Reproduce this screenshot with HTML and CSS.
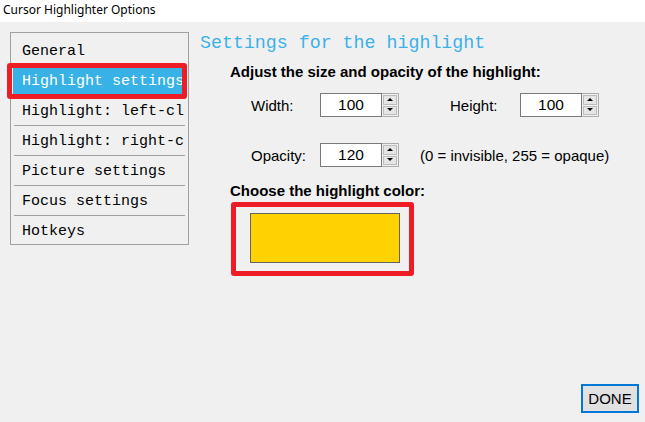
FILE: index.html
```html
<!DOCTYPE html>
<html>
<head>
<meta charset="utf-8">
<link rel="stylesheet" href="styles.css">
</head>
<body>
<div class="window">
  <div class="titlebar">Cursor Highlighter Options</div>
  <div class="content">
    <div class="listbox">
      <div class="item">General</div>
      <div class="item selected">Highlight settings</div>
      <div class="item">Highlight: left-cl</div>
      <div class="item">Highlight: right-c</div>
      <div class="item">Picture settings</div>
      <div class="item">Focus settings</div>
      <div class="item last">Hotkeys</div>
    </div>
    <div class="panel">
      <div class="heading">Settings for the highlight</div>
      <div class="subhead">Adjust the size and opacity of the highlight:</div>
      <div class="row row-size">
        <span class="label">Width:</span>
        <div class="spin"><span class="field">100</span><span class="arrows"><span class="btn up"></span><span class="btn down"></span></span></div>
        <span class="label label-height">Height:</span>
        <div class="spin"><span class="field">100</span><span class="arrows"><span class="btn up"></span><span class="btn down"></span></span></div>
      </div>
      <div class="row row-opacity">
        <span class="label">Opacity:</span>
        <div class="spin"><span class="field">120</span><span class="arrows"><span class="btn up"></span><span class="btn down"></span></span></div>
        <span class="hint">(0 = invisible, 255 = opaque)</span>
      </div>
      <div class="subhead subhead-color">Choose the highlight color:</div>
      <div class="swatch"></div>
    </div>
  </div>
  <div class="footer">
    <button class="done">DONE</button>
  </div>
  <div class="mark mark-list"></div>
  <div class="mark mark-color"></div>
</div>
</body>
</html>
```

FILE: styles.css
```css
html, body {
  margin: 0;
  padding: 0;
}
body {
  background: #f0f0f0;
  font-family: "Liberation Sans", Arial, sans-serif;
  color: #000;
}
.window {
  position: relative;
  width: 645px;
  height: 422px;
  display: flex;
  flex-direction: column;
  overflow: hidden;
}
.titlebar {
  height: 22px;
  background: #fff;
  font-family: "Noto Sans", "Open Sans", sans-serif;
  font-size: 12px;
  line-height: 20px;
  padding-left: 3px;
  box-sizing: border-box;
  color: #000;
}
.content {
  display: flex;
  flex: 1;
}
.listbox {
  margin: 10px 0 0 10px;
  width: 179px;
  height: 213px;
  box-sizing: border-box;
  border: 1px solid #a0a0a0;
  padding: 3px 3px 0 3px;
  overflow: hidden;
  display: flex;
  flex-direction: column;
}
.item {
  flex: none;
  height: 30px;
  box-sizing: border-box;
  border-bottom: 1px solid #a0a0a0;
  font-family: "Liberation Mono", "DejaVu Sans Mono", monospace;
  font-size: 15px;
  line-height: 32px;
  padding-left: 8px;
  white-space: nowrap;
  overflow: hidden;
}
.item.last {
  border-bottom: none;
}
.item.selected {
  background: #38b2e6;
  color: #fff;
  margin-left: -1px;
  padding-left: 9px;
}
.panel {
  margin-left: 11px;
  padding-top: 10px;
  display: flex;
  flex-direction: column;
}
.heading {
  font-family: "Liberation Mono", "DejaVu Sans Mono", monospace;
  font-size: 18.3px;
  line-height: 23px;
  color: #3cb0e8;
  white-space: nowrap;
}
.subhead {
  margin-left: 30px;
  margin-top: 8px;
  font-weight: bold;
  font-size: 15px;
  line-height: 18px;
  white-space: nowrap;
}
.row {
  display: flex;
  align-items: center;
  margin-left: 51px;
  height: 24px;
  font-size: 15px;
}
.row-size {
  margin-top: 12px;
}
.row-opacity {
  margin-top: 26px;
}
.label {
  width: 69px;
  flex: none;
}
.label-height {
  margin-left: 51px;
  width: 70px;
}
.spin {
  display: flex;
  height: 24px;
}
.field {
  width: 62px;
  height: 24px;
  box-sizing: border-box;
  background: #fff;
  border: 1px solid #7a7a7a;
  font-size: 15.5px;
  line-height: 22px;
  text-align: center;
}
.arrows {
  display: flex;
  flex-direction: column;
  width: 17px;
  height: 24px;
  box-sizing: border-box;
  border: 1px solid #adadad;
  border-left: none;
  padding: 1px;
  gap: 1px;
}
.btn {
  flex: 1;
  background: #e5e5e5;
  border: 1px solid #bdbdbd;
  position: relative;
}
.btn::after {
  content: "";
  position: absolute;
  left: 50%;
  top: 50%;
  margin-left: -3px;
  margin-top: -2px;
  border-left: 3px solid transparent;
  border-right: 3px solid transparent;
}
.btn.up::after {
  border-bottom: 3px solid #000;
}
.btn.down::after {
  border-top: 3px solid #000;
}
.hint {
  margin-left: 21px;
  white-space: nowrap;
}
.subhead-color {
  margin-top: 15px;
}
.swatch {
  margin-left: 50px;
  margin-top: 13px;
  width: 150px;
  height: 50px;
  box-sizing: border-box;
  background: #ffd200;
  border: 1px solid #646464;
}
.footer {
  display: flex;
  justify-content: flex-end;
  padding: 0 6px 9px 0;
}
.done {
  width: 58px;
  height: 29px;
  box-sizing: border-box;
  border: 2px solid #0078d7;
  background: #e1e1e1;
  font-family: "Liberation Sans", Arial, sans-serif;
  font-size: 15px;
  color: #000;
  padding: 0;
  margin: 0;
}
.mark {
  position: absolute;
  border: 5px solid #ee1c25;
  border-radius: 3px;
  box-sizing: border-box;
  pointer-events: none;
}
.mark-list {
  left: 7px;
  top: 63px;
  width: 180px;
  height: 36px;
}
.mark-color {
  left: 231px;
  top: 202px;
  width: 183px;
  height: 74px;
}
```
